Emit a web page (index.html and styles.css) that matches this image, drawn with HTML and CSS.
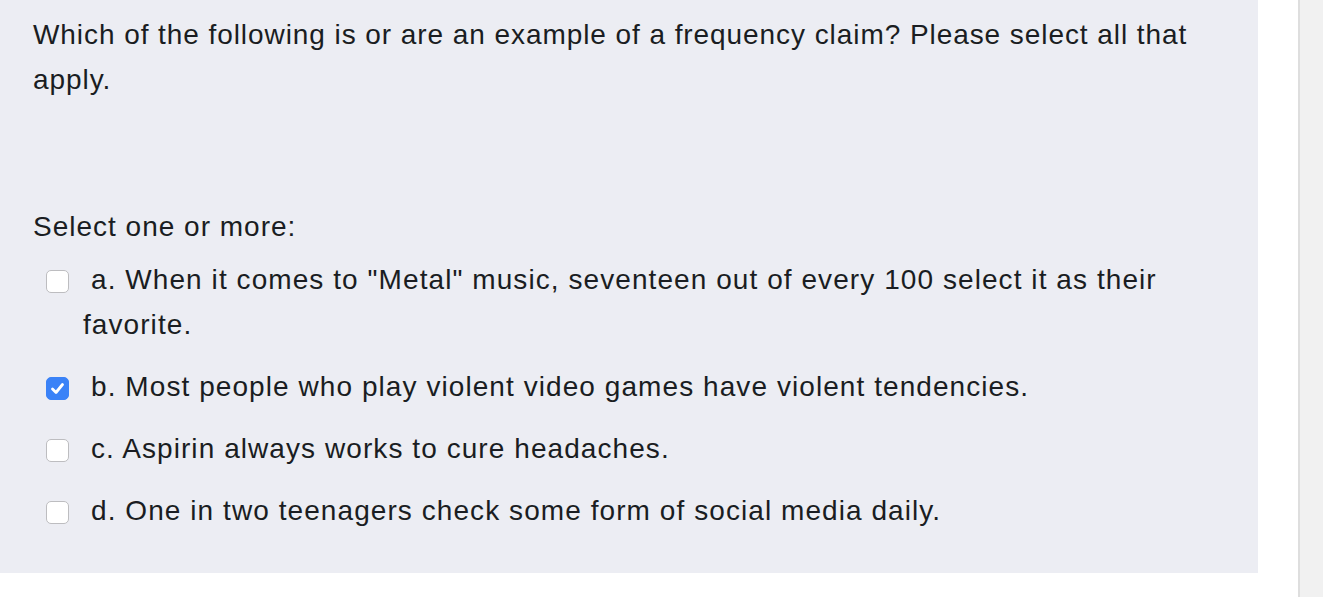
FILE: index.html
```html
<!DOCTYPE html>
<html lang="en">
<head>
<meta charset="utf-8">
<title>Question</title>
<link rel="stylesheet" href="styles.css">
</head>
<body>
<div class="page">
  <div class="formulation">
    <div class="qtext">Which of the following is or are an example of a frequency claim? Please select all that apply.</div>
    <div class="ablock">
      <div class="prompt">Select one or more:</div>
      <div class="answer">
        <div class="r"><input type="checkbox" class="cb"><span class="lbl">a. When it comes to "Metal" music, seventeen out of every 100 select it as their favorite.</span></div>
        <div class="r"><input type="checkbox" class="cb" checked><span class="lbl">b. Most people who play violent video games have violent tendencies.</span></div>
        <div class="r"><input type="checkbox" class="cb"><span class="lbl">c. Aspirin always works to cure headaches.</span></div>
        <div class="r"><input type="checkbox" class="cb"><span class="lbl">d. One in two teenagers check some form of social media daily.</span></div>
      </div>
    </div>
  </div>
  <div class="gap"></div>
  <div class="side"></div>
</div>
</body>
</html>
```
FILE: styles.css
```css
html, body {
  margin: 0;
  padding: 0;
  background: #ffffff;
}
body {
  font-family: "Liberation Sans", Arial, sans-serif;
  color: #1a1d22;
  font-size: 28px;
  line-height: 45px;
}
.page {
  display: flex;
  height: 597px;
  align-items: flex-start;
}
.formulation {
  width: 1258px;
  flex: none;
  box-sizing: border-box;
  background: #ecedf3;
  padding: 12px 60px 40px 33px;
  height: 573px;
}
.qtext {
  margin: 0;
  letter-spacing: 0.93px;
}
.ablock {
  margin-top: 102px;
}
.prompt {
  margin-bottom: 8px;
  letter-spacing: 1px;
}
.answer .r {
  padding-left: 50px;
  text-indent: -37px;
  margin-bottom: 17px;
  letter-spacing: 1.07px;
}
.cb {
  appearance: none;
  -webkit-appearance: none;
  width: 23px;
  height: 23px;
  box-sizing: border-box;
  border: 1px solid #bdbdc0;
  border-radius: 5px;
  background: #ffffff;
  margin: 0 22px 0 0;
  vertical-align: -4px;
  text-indent: 0;
  display: inline-block;
}
.cb:checked {
  background: #3a82f7 url("data:image/svg+xml;utf8,<svg xmlns='http://www.w3.org/2000/svg' viewBox='0 0 23 23'><path d='M6.5 12 L10 15.5 L16.5 7.5' fill='none' stroke='white' stroke-width='2.8' stroke-linecap='round' stroke-linejoin='round'/></svg>") center/23px 23px no-repeat;
  border-color: #3a82f7;
}
.gap {
  flex: 1;
}
.side {
  width: 23px;
  flex: none;
  height: 597px;
  background: #f1f1f1;
  border-left: 2px solid #dedede;
}
```
